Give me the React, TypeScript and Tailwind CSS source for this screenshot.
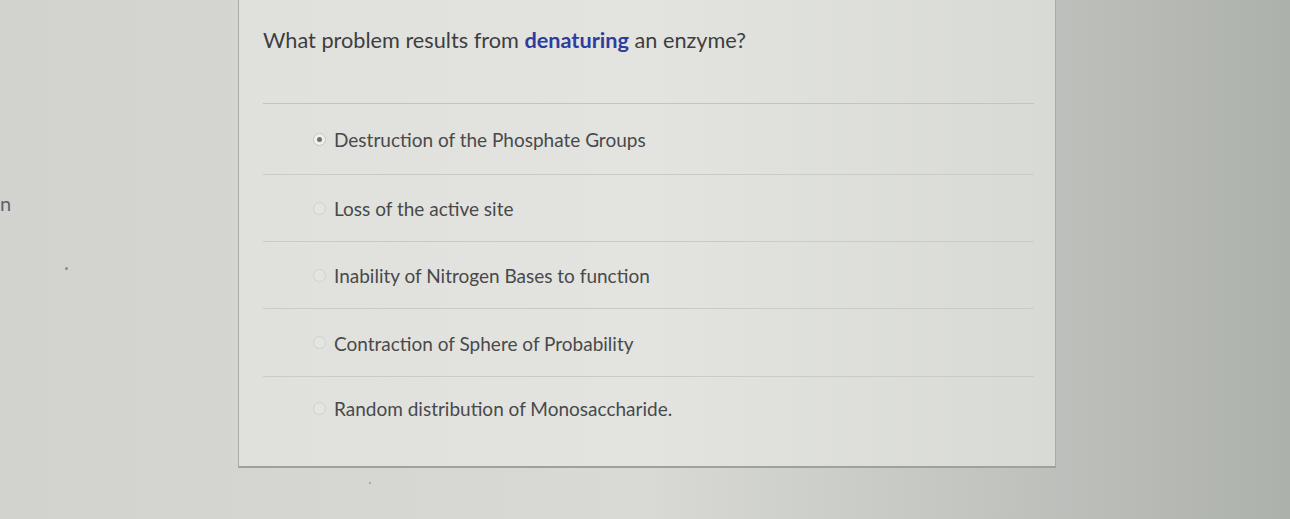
import React from "react";

const options = [
  { label: "Destruction of the Phosphate Groups", h: "h-[71px]", selected: true },
  { label: "Loss of the active site", h: "h-[67px]", selected: false },
  { label: "Inability of Nitrogen Bases to function", h: "h-[67px]", selected: false },
  { label: "Contraction of Sphere of Probability", h: "h-[68px]", selected: false },
  { label: "Random distribution of Monosaccharide.", h: "h-[62px]", selected: false },
];

function Radio({ selected }: { selected: boolean }) {
  if (selected) {
    return (
      <span className="flex h-[13px] w-[13px] items-center justify-center rounded-full border border-[#c6c8c4] bg-[#eef0ec]">
        <span className="h-[5px] w-[5px] rounded-full bg-[#6f716e]" />
      </span>
    );
  }
  return <span className="h-[13px] w-[13px] rounded-full border border-[#cfd1cd] bg-[#e3e5e1]" />;
}

export default function App() {
  return (
    <div
      className="relative h-[519px] w-[1290px] overflow-hidden bg-gradient-to-r from-[#d2d3cf] via-[#d9dad6] to-[#adb1ac]"
      style={{ fontFamily: "Lato, 'Open Sans', sans-serif" }}
    >
      <span className="absolute left-0 top-[193px] text-[20px] leading-none text-[#5b6470]">n</span>
      <span className="absolute left-[65px] top-[267px] h-[3px] w-[3px] rounded-full bg-[#8a8c88]" />
      <span className="absolute left-[369px] top-[482px] h-[2px] w-[2px] rounded-full bg-[#9a9c98]" />

      <div className="ml-[238px] w-[818px] border-x border-b-2 border-x-[#a9aba7] border-b-[#9fa19d] bg-gradient-to-r from-[#e0e1dd] via-[#e3e4e0] to-[#d8dad6] pl-[24px] pr-[21px]">
        <div className="h-[104px] border-b border-[#c2c4c0] pt-[25px]">
          <p className="text-[21.7px] leading-[30px] text-[#3d3e40]">
            What problem results from{" "}
            <span className="font-bold text-[#2f3c9e]">denaturing</span> an enzyme?
          </p>
        </div>
        <div className="pb-[27px]">
          {options.map((o, i) => (
            <div
              key={o.label}
              className={`flex items-center ${o.h} ${i < options.length - 1 ? "border-b border-[#cacbc7]" : ""}`}
            >
              <div className="flex w-[71px] justify-end pr-[8px]">
                <Radio selected={o.selected} />
              </div>
              <span className="pt-[2px] text-[19px] leading-[26px] text-[#48494a]">{o.label}</span>
            </div>
          ))}
        </div>
      </div>
    </div>
  );
}
